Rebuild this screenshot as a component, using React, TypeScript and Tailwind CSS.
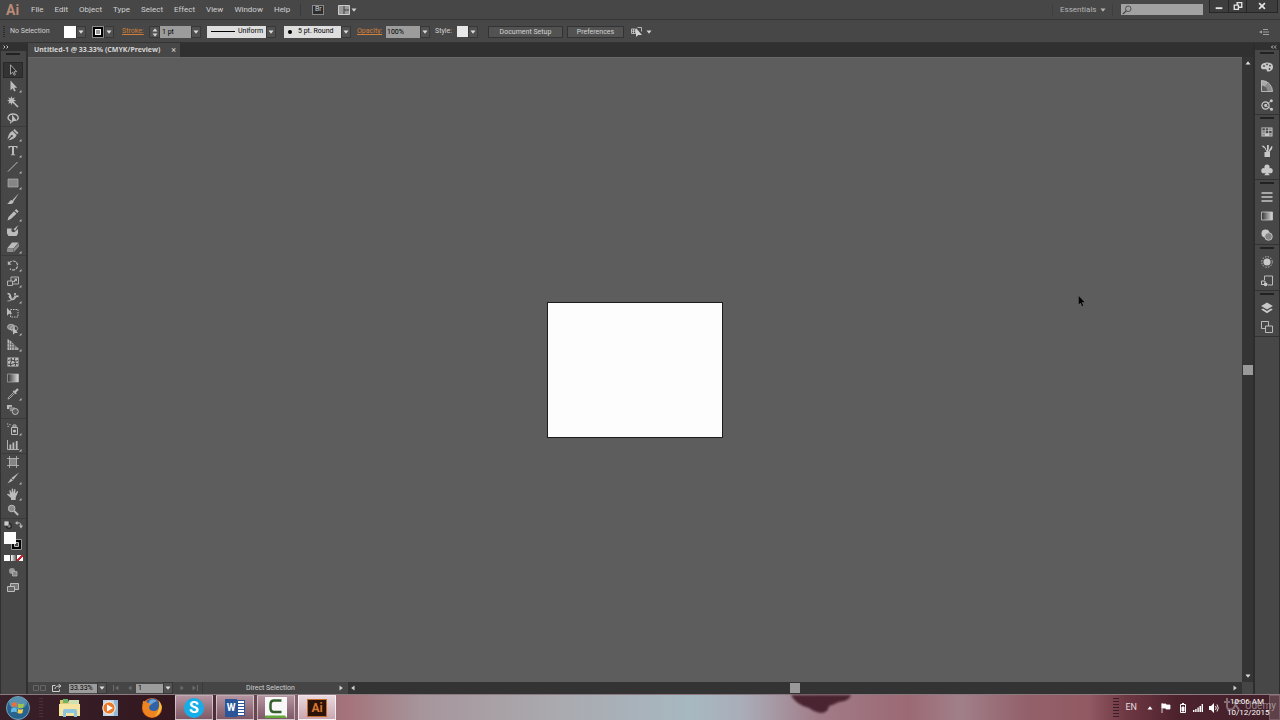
import type { ReactNode } from 'react'
import clsx from 'clsx'

interface Item {
  name: string
  icon: ReactNode
  more?: boolean
  active?: boolean
}

const menus = ['File', 'Edit', 'Object', 'Type', 'Select', 'Effect', 'View', 'Window', 'Help']

// All small icons are drawn on a 12 x 12 grid
const toolGroups: Item[][] = [
  [
    { name: 'Selection', active: true, icon: <path d="M3.5 .8v9.4l2.2-2 1.4 3 1.2-.6L7 7.700h2.700z" fill="#2c2c2c" stroke="currentColor" strokeWidth=".8" /> },
    { name: 'Direct Selection', more: true, icon: <path d="M3.500 .5v10l2.200-2.200 1.500 3.200 1.500-.7-1.500-3h3z" /> },
    {
      name: 'Magic Wand',
      icon: (
        <>
          <path d="M4.500 0l.8 2.500L7.800 1.300 6.700 3.700l2.500.8-2.500.9.9 2.300-2.300-1-.8 2.500-.9-2.500-2.300 1 1-2.300L0 4.500l2.400-.8-1.100-2.400 2.400 1.200z" />
          <path d="M6 6l5 5" stroke="currentColor" strokeWidth="1.600" />
        </>
      ),
    },
    {
      name: 'Lasso',
      icon: (
        <>
          <path d="M3 8.500C-.5 6.500 1 2 6 2s6.500 4 4 6M3 8.500c2 .5 1 2.500 0 2.500" fill="none" stroke="currentColor" strokeWidth="1.300" />
          <path d="M5 2.500v8l1.800-1.600H10z" />
        </>
      ),
    },
  ],
  [
    {
      name: 'Pen',
      more: true,
      icon: <path d="M7.500 0l4 4-1.300 1.300-4-4zM5.600 2l4 4C8.800 9 5.500 10.500 1.500 11.500l3-3.400A1.100 1.100 0 1 0 3.700 7.300L.5 10.500C1.300 6.500 2.500 3 5.600 2z" />,
    },
    { name: 'Type', more: true, icon: <path d="M1.500 1h9v2.600h-.8C9.500 2.400 9.100 2 7 2v7.200l1.300.5v.5H3.700v-.5L5 9.200V2c-2.100 0-2.500.4-2.700 1.600h-.8z" /> },
    { name: 'Line Segment', more: true, icon: <path d="M1 10.500L10.500 1" stroke="currentColor" strokeWidth="1" /> },
    { name: 'Rectangle', more: true, icon: <path d="M1 2h10v8H1z" fill="#858585" stroke="currentColor" strokeWidth=".6" /> },
    { name: 'Paintbrush', icon: <path d="M12 0L5.500 7l1.200 1.200zM5 7l1.800 1.700c-.8 2-3 2.800-6.800 2 2-.3 2.600-3.700 5-3.700z" /> },
    {
      name: 'Pencil',
      more: true,
      icon: <path d="M9.200 0l2.500 2.500L10.200 4 7.700 1.500zM7 2.200l2.500 2.500-5.700 5.300L.5 11.500l1-3.500z" />,
    },
    { name: 'Blob Brush', icon: <path d="M11.500 0L6.500 4.300l1.700 1.500zM0 3.500h5C3.500 5.500 5 7.700 7.500 7L11 4v4.500L9.500 11H1.500L0 8.500z" /> },
    {
      name: 'Eraser',
      more: true,
      icon: (
        <>
          <path d="M5 1.500h6.500l-5 6H0z" />
          <path d="M0 8h6.500v3H0zM7 7.500l5-5.500v3.500L7 11z" fill="#8c8c8c" />
        </>
      ),
    },
  ],
  [
    {
      name: 'Rotate',
      more: true,
      icon: (
        <>
          <path d="M2.300 4A4.500 4.500 0 1 1 3 9.800" fill="none" stroke="currentColor" strokeWidth="1.200" strokeDasharray="3 1" />
          <path d="M.8 2v3.800h3.700z" />
        </>
      ),
    },
    {
      name: 'Scale',
      more: true,
      icon: (
        <>
          <path d="M.5 6h5v4.500h-5zM4 2h7.500v7H5.500M4 2v4" fill="none" stroke="currentColor" strokeWidth=".9" />
          <path d="M6 6.500l2-2-1-1h3v3l-1-1-2 2z" />
        </>
      ),
    },
    {
      name: 'Width',
      more: true,
      icon: (
        <>
          <path d="M.5 2.500c5 0 1.500 6 5 6s2-5 6-3" fill="none" stroke="currentColor" strokeWidth="1.600" />
          <path d="M.5 10c3 0 7-2 8-7.500M2 5.500L5 9" fill="none" stroke="currentColor" strokeWidth=".9" />
          <circle cx="3" cy="6" r="1.200" />
          <circle cx="8" cy="3" r="1.100" />
        </>
      ),
    },
    {
      name: 'Free Transform',
      icon: (
        <>
          <path d="M3.500 2.500h7.500v7.500H3.500z" fill="none" stroke="currentColor" strokeWidth="1" strokeDasharray="1.500 1" />
          <path d="M0 .8v8l2-2h3.300z" />
        </>
      ),
    },
    {
      name: 'Shape Builder',
      more: true,
      icon: (
        <>
          <ellipse cx="4" cy="4" rx="3.500" ry="2.700" fill="#858585" stroke="currentColor" strokeWidth=".8" />
          <ellipse cx="7" cy="5.500" rx="3.700" ry="2.800" fill="none" stroke="currentColor" strokeWidth=".8" />
          <path d="M6 3.500v8.200l1.900-1.800h3z" />
        </>
      ),
    },
    {
      name: 'Perspective Grid',
      more: true,
      icon: (
        <>
          <path d="M.5 0l4 2.500V11h-4z" />
          <path d="M5 3.500L7.500 5.500V11H5zM8 6.500l3.500 2.500v2H8z" fill="#a6a6a6" />
          <path d="M2.500 1v10M0 4.500l8 1.500M0 8h11" stroke="#474747" strokeWidth=".5" />
        </>
      ),
    },
    {
      name: 'Mesh',
      icon: (
        <>
          <path d="M.5 1.500h11v9H.5z" />
          <path d="M1 4.500c4-2 6 2 10 0M1 8c4 2 6-2 10 0M4 2c2 3-2 5 0 8M8 2c-2 3 2 5 0 8" fill="none" stroke="#3c3c3c" strokeWidth="1" />
        </>
      ),
    },
    { name: 'Gradient', icon: <path d="M.5 2h11v8H.5z" fill="url(#ramp)" stroke="currentColor" strokeWidth=".6" /> },
    {
      name: 'Eyedropper',
      more: true,
      icon: (
        <>
          <path d="M7.500 3L10 .5c1 0 1.500.7 1.500 1.500L9 4.500l.8.800-1 1L5.700 3.200l1-1z" />
          <path d="M6.500 4.500l1 1-5 5-1.500.5.5-1.500z" fill="none" stroke="currentColor" strokeWidth=".8" />
        </>
      ),
    },
    {
      name: 'Blend',
      icon: (
        <>
          <path d="M0 1h5v4H0z" />
          <path d="M2.500 3H8v4.500H2.500z" fill="#8c8c8c" stroke="#474747" strokeWidth=".5" />
          <circle cx="8.300" cy="7.500" r="3" fill="#5a5a5a" stroke="currentColor" strokeWidth="1" />
        </>
      ),
    },
  ],
  [
    {
      name: 'Symbol Sprayer',
      more: true,
      icon: (
        <>
          <path d="M4.500 4.500h6v7h-6zM6 2h3v2H6z" fill="none" stroke="currentColor" strokeWidth="1" />
          <circle cx="7.500" cy="8" r="1.600" />
          <path d="M0 .5h1.300v1H0zM2.300 1.200h1.300v1H2.300zM.5 3h1.300v1H.5z" />
        </>
      ),
    },
    {
      name: 'Column Graph',
      more: true,
      icon: (
        <>
          <path d="M.5 1v9.500H12" fill="none" stroke="currentColor" strokeWidth=".9" />
          <path d="M2.500 5.500h1.800V10H2.500zM5.500 3.500h1.800V10H5.500zM8.800 2h1.800v8H8.800z" />
        </>
      ),
    },
  ],
  [
    {
      name: 'Artboard',
      icon: (
        <>
          <path d="M2.500 2.500h7v7h-7z" fill="#858585" />
          <path d="M2.500 0v12M9.500 0v12M0 2.500h12M0 9.500h12" stroke="currentColor" strokeWidth=".8" />
        </>
      ),
    },
    { name: 'Slice', more: true, icon: <path d="M12 .5L4.500 6l1.800 1.800zM4 6.500L6 8.500.5 11.500z" /> },
    { name: 'Hand', more: true, icon: <path d="M3 6.500L2.300 2.500c.6-.7 1.200-.3 1.400.3L4.800 5l-.1-4c.6-.8 1.200-.5 1.400.2L6.500 5l.8-3.800c.7-.6 1.300-.1 1.200.6L8.200 5.500 10 3.200c.9-.3 1.200.3.900 1L8.700 9.500V12H4V10L0 6.500c.2-.9 1.200-.8 1.800-.3z" /> },
    {
      name: 'Zoom',
      icon: (
        <>
          <circle cx="4.700" cy="4.500" r="3.300" fill="#8a8a8a" stroke="currentColor" strokeWidth="1" />
          <path d="M7.200 7l4 4" stroke="currentColor" strokeWidth="1.800" />
        </>
      ),
    },
  ],
]

const panelGroups: Item[][] = [
  [
    {
      name: 'Color',
      icon: (
        <>
          <path d="M5.500 1.500C9 1 12 3 12 6s-3 5-5.500 4.500c-1.300-.3 0-2-1.500-2.300C3 8 0 9 0 6s2.500-4.200 5.500-4.500z" />
          <g fill="#474747">
            <circle cx="3" cy="5" r=".9" />
            <circle cx="6" cy="3.400" r=".9" />
            <circle cx="9" cy="4.700" r=".9" />
            <circle cx="8.500" cy="8" r=".9" />
          </g>
        </>
      ),
    },
    {
      name: 'Color Guide',
      icon: (
        <>
          <path d="M.5 .5a11 11 0 0 1 11 11H.5z" fill="#8c8c8c" />
          <path d="M.5 .5c2.500 0 4.500.7 6.200 1.900L.5 11.500z" fill="#a8a8a8" />
          <path d="M.5 5.500a6 6 0 0 1 6 6h-6z" fill="#5e5e5e" />
          <path d="M.5 .5a11 11 0 0 1 11 11H.5z" fill="none" stroke="currentColor" strokeWidth=".8" />
        </>
      ),
    },
    {
      name: 'Kuler',
      icon: (
        <>
          <circle cx="4.500" cy="6.500" r="3.600" fill="none" stroke="currentColor" strokeWidth="1.200" />
          <circle cx="4.500" cy="6.500" r="1.400" />
          <path d="M5 6l5-4M5 7l5.500 3" stroke="currentColor" strokeWidth=".9" />
          <circle cx="10.300" cy="1.700" r="1.500" />
          <circle cx="10.500" cy="10.300" r="1.500" />
        </>
      ),
    },
  ],
  [
    {
      name: 'Swatches',
      icon: (
        <>
          <path d="M.5 1.500h11v9H.5z" />
          <path d="M1.300 2.300h2.600v2.200H1.300zM4.700 2.300h2.600v2.200H4.700zM8.100 5h2.600v2.200H8.100zM4.700 5h2.600v2.200H4.700z" fill="#4c4c4c" />
          <path d="M8.100 2.300h2.600v2.200H8.100zM1.300 5h2.600v2.200H1.300zM1.300 7.800h2.600v2H1.300zM8.100 7.800h2.600v2H8.100z" fill="#8a8a8a" />
        </>
      ),
    },
    { name: 'Brushes', icon: <path d="M3.500 7h5.500v5H3.500zM5.500 7L3.800 3.500 2.300 2.500.5.800h2.200l1.800 2L6 6V0h1.800v3.500L7 7l2-3.500L10.500 1l1 .5L11 4 8.500 7z" /> },
    {
      name: 'Symbols',
      icon: (
        <>
          <circle cx="6" cy="3" r="2.600" />
          <circle cx="2.900" cy="6.700" r="2.600" />
          <circle cx="9.100" cy="6.700" r="2.600" />
          <path d="M5 4h2l.3 5 1.500 2.300h-5.500L4.700 9z" />
        </>
      ),
    },
  ],
  [
    { name: 'Stroke', icon: <path d="M.5 2h11M.5 6h11M.5 10h11" stroke="currentColor" strokeWidth="1.300" /> },
    { name: 'Gradient', icon: <path d="M.5 2h11v8H.5z" fill="url(#ramp)" stroke="currentColor" strokeWidth=".8" /> },
    {
      name: 'Transparency',
      icon: (
        <>
          <circle cx="4.500" cy="4.500" r="4" />
          <circle cx="7.500" cy="7.500" r="3.800" fill="#858585" stroke="currentColor" strokeWidth=".9" />
        </>
      ),
    },
  ],
  [
    {
      name: 'Appearance',
      icon: (
        <>
          <circle cx="6" cy="6" r="3.600" />
          <circle cx="6" cy="6" r="5.300" fill="none" stroke="currentColor" strokeWidth=".9" strokeDasharray="1.500 1.270" />
        </>
      ),
    },
    {
      name: 'Graphic Styles',
      icon: (
        <>
          <path d="M3.500 5V1h8v9H7" fill="none" stroke="currentColor" strokeWidth=".9" />
          <path d="M.5 6h3.500v3.500H.5z" fill="none" stroke="currentColor" strokeWidth="1" />
          <circle cx="4.600" cy="9.300" r="1.900" />
        </>
      ),
    },
  ],
  [
    {
      name: 'Layers',
      icon: (
        <>
          <path d="M6 .5l5.800 3.500L6 7.500.2 4z" />
          <path d="M2 6.400L.2 7.500 6 11.200l5.800-3.700L10 6.400 6 9z" />
        </>
      ),
    },
    {
      name: 'Artboards',
      icon: (
        <>
          <path d="M.5 .5h7v7h-7z" fill="none" stroke="currentColor" strokeWidth=".9" />
          <path d="M4.500 5h7v6.500h-7z" fill="#474747" stroke="currentColor" strokeWidth=".9" />
        </>
      ),
    },
  ],
]

const taskbarLight = 'border-white/50 bg-linear-to-b from-[#b494a0] to-[#7e5866]'

function Glyph({ children }: { children: ReactNode }) {
  return (
    <svg viewBox="0 0 12 12" className="size-3 shrink-0" fill="currentColor" aria-hidden="true">
      {children}
    </svg>
  )
}

function Caret({ dir = 'down' }: { dir?: 'down' | 'up' | 'left' | 'right' }) {
  const paths = {
    down: 'M.5 1.500h5L3 4.800z',
    up: 'M.5 4.500h5L3 1.200z',
    left: 'M4.500 .5v5L1.200 3z',
    right: 'M1.500 .5v5L4.800 3z',
  }
  return (
    <svg viewBox="0 0 6 6" className="size-[6px] shrink-0" fill="currentColor" aria-hidden="true">
      <path d={paths[dir]} />
    </svg>
  )
}

function DropButton({ label }: { label: string }) {
  return (
    <button aria-label={label} className="flex h-3 w-[10px] shrink-0 items-center justify-center border border-[#383838] bg-[#505050] text-[#dcdcdc]">
      <Caret />
    </button>
  )
}

function TitleBar() {
  return (
    <header className="flex h-5 items-center border-b border-[#363636] bg-[#474747] pl-[6px] text-[8px] text-[#d0d0d0]">
      <span className="w-[25px] text-[14px] leading-4 font-bold text-[#b98b76]">Ai</span>
      <nav className="flex items-center gap-[11px]">
        {menus.map((menu) => (
          <button key={menu}>{menu}</button>
        ))}
      </nav>
      <div className="ml-[10px] h-3 w-px bg-[#393942]" />
      <button className="ml-[11px] flex h-[10px] w-3 items-center justify-center border border-[#8a8a8a] bg-[#2d2d2d] text-[7px]">Br</button>
      <button aria-label="Arrange Documents" className="ml-[14px] flex items-center gap-px">
        <svg viewBox="0 0 12 10" className="h-[10px] w-3">
          <path d="M.5 .5h11v9H.5z" fill="#999" stroke="#ccc" />
          <path d="M6 1v8M6 5h5" stroke="#404040" />
        </svg>
        <Caret />
      </button>
      <div className="ml-auto flex h-full items-center">
        <div className="h-3 w-px bg-[#3e3e3e]" />
        <button className="flex w-[59px] items-center justify-between pr-[6px] pl-[7px] text-[#b4b4b4]">
          Essentials
          <Caret />
        </button>
        <div className="h-3 w-px bg-[#3e3e3e]" />
        <label className="ml-2 flex h-[11px] w-[82px] items-center bg-[#a2a2a2] text-[#404040]">
          <svg viewBox="0 0 12 12" className="h-[10px] w-3 shrink-0" fill="none" stroke="currentColor">
            <circle cx="7.500" cy="4.500" r="3.300" />
            <path d="M5 7l-4 4" strokeWidth="1.500" />
          </svg>
          <input type="search" aria-label="Search help" className="w-full min-w-0 outline-none" />
        </label>
        <div className="mr-[2px] ml-[6px] flex h-[13px] self-start border border-t-0 border-[#262626] bg-[#3d3d3d] text-[#e4e4e4]">
          <button aria-label="Minimize" className="flex w-[19px] items-center justify-center border-r border-[#262626]">
            <svg viewBox="0 0 12 12" className="size-[10px]"><path d="M2 7.500h8v2.200H2z" fill="currentColor" /></svg>
          </button>
          <button aria-label="Restore" className="flex w-[18px] items-center justify-center border-r border-[#262626]">
            <svg viewBox="0 0 12 12" className="size-[10px]" fill="none" stroke="currentColor" strokeWidth="1.600">
              <path d="M1.500 5h5v5h-5zM5 5V2h5.500v5.500H7" />
            </svg>
          </button>
          <button aria-label="Close" className="flex w-[30px] items-center justify-center">
            <svg viewBox="0 0 12 12" className="size-[10px]" stroke="currentColor" strokeWidth="2"><path d="M2.500 2.500l7 7M9.500 2.500l-7 7" /></svg>
          </button>
        </div>
      </div>
    </header>
  )
}

function ControlBar() {
  return (
    <div className="flex h-[23px] items-center border-b border-[#333] bg-[#474747] pt-px pl-[3px] text-[7px] text-[#d2d2d2]">
      <div className="h-3 w-[2px] bg-[repeating-linear-gradient(to_bottom,#2c2c2c_0_1px,#474747_1px_2px)]" />
      <span className="ml-[5px] w-[54px] whitespace-nowrap">No Selection</span>
      <button aria-label="Fill" className="size-3 bg-white" />
      <DropButton label="Fill options" />
      <button aria-label="Stroke color" className="ml-[6px] flex size-3 items-center justify-center border border-[#8a8a8a] bg-black">
        <span className="size-[6px] border border-white bg-[#999]" />
      </button>
      <DropButton label="Stroke color options" />
      <a href="#stroke" className="ml-2 w-[27px] text-[#d0803a] underline">Stroke:</a>
      <div className="flex h-3 w-[11px] flex-col items-center justify-center border border-[#383838] bg-[#505050]">
        <button aria-label="Increase stroke" className="h-[5px]"><Caret dir="up" /></button>
        <button aria-label="Decrease stroke" className="h-[5px]"><Caret /></button>
      </div>
      <input aria-label="Stroke weight" defaultValue="1 pt" className="h-3 w-[31px] bg-[#9c9c9c] px-[2px] text-black outline-none" />
      <DropButton label="Stroke weight options" />
      <label className="ml-[6px] flex h-3 w-[59px] items-center bg-[#dedede] pl-1 text-black">
        <span className="h-px w-6 bg-black" />
        <select aria-label="Width profile" className="ml-[3px] w-7 appearance-none outline-none">
          <option>Uniform</option>
        </select>
      </label>
      <DropButton label="Width profile options" />
      <label className="ml-2 flex h-3 w-[57px] items-center bg-[#dedede] pl-1 text-black">
        <span className="size-1 rounded-full bg-black" />
        <select aria-label="Brush definition" className="ml-[6px] w-[42px] appearance-none outline-none">
          <option>5 pt. Round</option>
        </select>
      </label>
      <DropButton label="Brush options" />
      <a href="#opacity" className="ml-[6px] w-[29px] text-[#d0803a] underline">Opacity:</a>
      <input aria-label="Opacity" defaultValue="100%" className="h-3 w-[34px] bg-[#9c9c9c] px-px text-black outline-none" />
      <DropButton label="Opacity options" />
      <span className="ml-[5px] w-[22px]">Style:</span>
      <button aria-label="Graphic style" className="size-[11px] bg-[#e8e8e8]" />
      <DropButton label="Graphic style options" />
      <button className="ml-[10px] h-3 w-[75px] border border-[#333] bg-[#525252] leading-[10px] whitespace-nowrap">Document Setup</button>
      <button className="ml-1 h-3 w-[57px] border border-[#333] bg-[#525252] leading-[10px]">Preferences</button>
      <button aria-label="Select similar" className="ml-[7px] flex items-center gap-[3px]">
        <Glyph>
          <path d="M.5 3h4v4.500h-4zM2.500 3v4.500M.5 5.200h4M6.500 1.500h4v4" fill="none" stroke="currentColor" strokeWidth=".8" />
          <path d="M5 2v9l2.200-2H11z" />
        </Glyph>
        <Caret />
      </button>
      <button aria-label="Control panel menu" className="mr-[11px] ml-auto">
        <svg viewBox="0 0 10 8" className="h-2 w-[10px]" fill="none" stroke="#a8a8a8">
          <path d="M4 1.500h5M4 4h6M4 6.500h6" strokeWidth=".9" />
          <path d="M0 4l3-1.500v3z" fill="#a8a8a8" stroke="none" />
        </svg>
      </button>
    </div>
  )
}

function ToolPanel() {
  return (
    <aside className="flex w-7 shrink-0 flex-col border-r-2 border-l border-[#303030] bg-[#474747] text-[#bcbcbc]">
      <div className="flex h-2 items-center bg-[#303030] pl-[2px]">
        <svg viewBox="0 0 6 4" className="h-1 w-[6px]" fill="none" stroke="currentColor"><path d="M.5 .5L2 2 .5 3.500M3.500 .5L5 2 3.500 3.500" /></svg>
      </div>
      <div className="mt-[2px] mb-[7px] ml-[5px] h-[2px] w-[14px] bg-[#222]" />
      {toolGroups.map((group, i) => (
        <div key={i} className={clsx('flex flex-col pl-[2px]', i > 0 && 'border-t border-[#3b3b3b]', i === 3 && 'pt-[2px]')}>
          {group.map((tool) => (
            <button
              key={tool.name}
              aria-label={tool.name}
              className={clsx('h-4 w-5 border', tool.active ? 'border-[#292929] bg-[#333]' : 'border-transparent', tool.name === 'Rotate' && 'mt-px', tool.name === 'Mesh' && 'mt-px')}
            >
              <svg viewBox="0 0 18 14" className="h-[14px] w-[18px]" fill="currentColor">
                <g transform="translate(3 1)">{tool.icon}</g>
                {tool.more && <path d="M17.500 11v2.500H15z" />}
              </svg>
            </button>
          ))}
        </div>
      ))}
      <div className="flex h-[13px] items-center justify-between border-t border-[#3b3b3b] px-[3px]">
        <button aria-label="Default fill and stroke">
          <svg viewBox="0 0 8 8" className="size-2"><path d="M3 3h4v4H3z" stroke="#111" fill="#999" /><path d="M0 0h5v5H0z" fill="#ccc" stroke="#222" strokeWidth=".6" /></svg>
        </button>
        <button aria-label="Swap fill and stroke">
          <svg viewBox="0 0 8 8" className="size-2" fill="currentColor"><path d="M2 2h2.500Q6 2 6 5" fill="none" stroke="currentColor" /><path d="M0 2l2.500-2v4zM4 4.500h4L6 7.500z" /></svg>
        </button>
      </div>
      <button aria-label="Fill and stroke" className="mt-px ml-[3px] size-[19px]">
        <svg viewBox="0 0 19 19" className="size-[19px]">
          <path d="M7.500 7.500h10v10h-10z" fill="#000" stroke="#999" />
          <path d="M10.500 10.500h4v4h-4z" fill="#474747" stroke="#bbb" />
          <path d="M0 0h12v12H0z" fill="#fcfcfc" />
        </svg>
      </button>
      <div className="mt-1 ml-[3px] flex h-[6px] gap-px">
        <button aria-label="Color" className="w-[6px] bg-white" />
        <button aria-label="Gradient" className="w-[5px] bg-linear-to-r from-white to-[#666]" />
        <button aria-label="None" className="w-[6px] bg-[linear-gradient(135deg,#fff_0_35%,#d02030_35%_65%,#fff_65%)]" />
      </div>
      <button aria-label="Drawing mode" className="mt-[6px] ml-[7px] w-[10px]">
        <svg viewBox="0 0 10 10" className="size-[10px]"><circle cx="4" cy="4" r="3" fill="#999" /><path d="M4.500 4.500h4.500v4.500H4.500z" fill="#858585" stroke="#bbb" strokeWidth=".7" /></svg>
      </button>
      <button aria-label="Screen mode" className="mt-[5px] ml-[6px] w-3">
        <Glyph>
          <path d="M3.500 1.500h8v6h-8z" fill="#777" stroke="currentColor" />
          <path d="M.5 4.500h7v5h-7z" fill="#666" stroke="currentColor" />
        </Glyph>
      </button>
    </aside>
  )
}

function StatusBar() {
  return (
    <div className="flex h-3 shrink-0 items-center bg-[#333] text-[7px] text-[#d0d0d0]">
      <div className="flex h-full w-[320px] shrink-0 items-center bg-[#454545] pl-[5px]">
        <svg viewBox="0 0 13 6" className="h-[6px] w-[13px]" fill="none" stroke="#666"><path d="M.5 .5h5v5h-5zM7.500 .5h5v5h-5z" /></svg>
        <button aria-label="Share" className="ml-[6px]">
          <svg viewBox="0 0 10 8" className="h-2 w-[10px]" fill="none" stroke="currentColor"><path d="M3.500 1.500h-3v6h7v-2M3 5q0-3 5-3M6.500 0L9 2 6.500 4" /></svg>
        </button>
        <input aria-label="Zoom level" defaultValue="33.33%" className="ml-[7px] h-[9px] w-7 bg-[#9c9c9c] px-px text-black outline-none" />
        <DropButton label="Zoom options" />
        <div className="ml-[6px] flex gap-[7px] text-[#6c6c6c]">
          <button aria-label="First artboard" className="flex border-l"><Caret dir="left" /></button>
          <button aria-label="Previous artboard" className="flex"><Caret dir="left" /></button>
        </div>
        <input aria-label="Artboard number" defaultValue="1" className="ml-[3px] h-[9px] w-[27px] bg-[#9c9c9c] px-[2px] text-black outline-none" />
        <DropButton label="Artboard options" />
        <div className="ml-[6px] flex gap-[6px] text-[#6c6c6c]">
          <button aria-label="Next artboard" className="flex"><Caret dir="right" /></button>
          <button aria-label="Last artboard" className="flex border-r"><Caret dir="right" /></button>
        </div>
        <div className="ml-1 h-full w-px bg-[#3a3a3a]" />
        <span className="flex-1 text-center whitespace-nowrap">Direct Selection</span>
        <button aria-label="Status options" className="mr-1"><Caret dir="right" /></button>
      </div>
      <button aria-label="Scroll left" className="px-[2px]"><Caret dir="left" /></button>
      <div className="flex flex-1 justify-center"><div className="size-[10px] bg-[#999]" /></div>
      <button aria-label="Scroll right" className="mr-1"><Caret dir="right" /></button>
      <div className="h-full w-[11px] bg-[#454545]" />
    </div>
  )
}

function Workspace() {
  return (
    <main className="flex min-w-0 flex-1 flex-col">
      <div className="flex h-[14px] shrink-0 bg-[#303030]">
        <div className="flex w-[152px] items-center justify-between bg-[#474747] pr-1 pl-[6px] text-[#d4d4d4]">
          <span className="font-['Noto_Sans',sans-serif] text-[7px] leading-[14px] font-bold whitespace-nowrap">Untitled-1 @ 33.33% (CMYK/Preview)</span>
          <button aria-label="Close document" className="text-[9px] leading-[14px]">×</button>
        </div>
      </div>
      <div className="flex flex-1">
        <div className="flex flex-1 items-center justify-center border-t border-[#686868] bg-[#5d5d5d]">
          <div className="h-[136px] w-44 border border-[#1c1c1c] bg-[#fdfdfd]" />
        </div>
        <div className="flex w-[11px] shrink-0 flex-col items-center bg-[#343434] py-[3px] text-[#dcdcdc]">
          <button aria-label="Scroll up"><Caret dir="up" /></button>
          <div className="flex flex-1 items-center"><div className="size-[10px] bg-[#999]" /></div>
          <button aria-label="Scroll down"><Caret /></button>
        </div>
      </div>
      <StatusBar />
    </main>
  )
}

function PanelDock() {
  return (
    <aside className="w-[27px] shrink-0 border-r border-l-2 border-[#2d2d2d] bg-[#474747] text-[#c8c8c8]">
      <div className="flex h-[7px] items-center justify-end bg-[#303030] pr-[2px]">
        <svg viewBox="0 0 6 4" className="h-1 w-[6px]" fill="none" stroke="currentColor"><path d="M2 .5L.5 2 2 3.500M5 .5L3.500 2 5 3.500" /></svg>
      </div>
      {panelGroups.map((group, i) => (
        <div key={i} className="flex flex-col items-center border-b border-[#333] pt-[2px]">
          <div className="mb-[3px] h-[2px] w-[14px] bg-[#222]" />
          {group.map((panel) => (
            <button key={panel.name} aria-label={panel.name} className="flex h-[19px] items-center">
              <Glyph>{panel.icon}</Glyph>
            </button>
          ))}
        </div>
      ))}
    </aside>
  )
}

function Taskbar() {
  return (
    <footer className="relative flex h-[26px] shrink-0 items-center border-t border-[#8b7b80] bg-[linear-gradient(to_right,#382029_0%,#33171f_14%,#96707a_25%,#a5727a_27%,#a6969c_33%,#aaa9ae_43%,#a7b8c1_54%,#a9adb8_58%,#a17c88_64%,#9b6974_71%,#a1808a_75%,#93616b_80%,#925a63_85%,#6e3843_88%,#4c222d_92%,#41202a_100%)] pl-[6px] text-white">
      <svg viewBox="0 0 62 19" className="absolute top-0 left-[790px] h-[19px] w-[62px] blur-[1px]" aria-hidden="true">
        <path d="M1 0h60q-2 6-12 7-6 3-10 4-1 7-8 7-7-1-12-5Q5 9 1 0z" fill="#4a2531" />
      </svg>
      <button aria-label="Start" className="relative">
        <svg viewBox="0 0 24 24" className="size-6">
          <circle cx="12" cy="12" r="11.500" fill="#27638c" stroke="#8fb5ca" strokeWidth=".8" />
          <ellipse cx="12" cy="7" rx="9" ry="6" fill="#79afc8" opacity=".6" />
          <path d="M6 7q3-1.500 5 0v4q-2-1.500-5.500 0z" fill="#e8703c" />
          <path d="M12 7.500q2.500 1 6 0l-.8 4q-2.700 1-5.200 0z" fill="#9bc84c" />
          <path d="M5.300 12.500q3-1.500 5.500 0v4q-2.500-1.500-6 0z" fill="#62b9e8" />
          <path d="M12 13q2.500 1 5.200 0l-.8 4q-2.500 1-4.900 0z" fill="#f8d04f" />
        </svg>
      </button>
      <div className="ml-[9px] h-5 w-1 bg-[repeating-linear-gradient(to_bottom,#4a313b_0_1px,transparent_1px_3px)]" />
      <button aria-label="Explorer" className="ml-4">
        <svg viewBox="0 0 22 20" className="h-5 w-[22px]">
          <path d="M1 2h8l1 2h10v14H1z" fill="#e3c870" />
          <path d="M4 1h5v4H4z" fill="#6ab36a" />
          <path d="M10 2h10v4H10z" fill="#cfe0b2" />
          <path d="M0 6h21v12H0z" fill="#f5e3a0" />
          <path d="M4 19v-6q0-2 2-2h10q2 0 2 2v6h-3v-4H7v4z" fill="#8cc5dd" />
        </svg>
      </button>
      <button aria-label="Media Player" className="ml-5">
        <svg viewBox="0 0 18 18" className="size-[18px]">
          <path d="M2 1h15v16H2z" fill="#91b9d3" />
          <path d="M2 1h11v16H2z" fill="#bdd5e4" />
          <circle cx="8" cy="9" r="6.200" fill="#eb7a2b" stroke="#fff" />
          <path d="M6 5.500v7l6-3.500z" fill="#fff" />
        </svg>
      </button>
      <button aria-label="Firefox" className="ml-[22px]">
        <svg viewBox="0 0 22 22" className="size-[22px]">
          <circle cx="11" cy="11" r="10" fill="#e66a1d" />
          <circle cx="11.500" cy="8.500" r="7" fill="#2f62a8" />
          <path d="M9 3q4-2 7 1l-4 2q-2 3-5 1z" fill="#6aa5d8" />
          <path d="M2 4q3 0 5 2l3 1-2 3q0 4 5 4 4 0 5-4 2 3 2-3 2 8-4 12-6 3-11-1-5-5-3-14z" fill="#ef8421" />
          <path d="M18 4q4 5 2 9-2 5-6 6 5-5 4-15z" fill="#f8bc37" />
        </svg>
      </button>
      <div className="ml-3 flex gap-[3px]">
        <button aria-label="Skype" className={clsx('flex h-[25px] w-[38px] items-center justify-center border', taskbarLight)}>
          <span className="flex size-5 items-center justify-center rounded-full bg-[#16aee8] text-[16px] leading-none font-bold text-white">S</span>
        </button>
        <button aria-label="Word" className={clsx('flex h-[25px] w-[38px] items-center justify-center border', taskbarLight)}>
          <span className="flex h-[18px] w-3 items-center justify-center bg-[#2a5699] text-[10px] font-bold text-white">W</span>
          <span className="h-4 w-2 border border-[#2a5699] bg-[repeating-linear-gradient(to_bottom,#fff_0_2px,#2a5699_2px_3px)]" />
        </button>
        <button aria-label="Camtasia" className={clsx('flex h-[25px] w-[38px] items-center justify-center border', taskbarLight)}>
          <svg viewBox="0 0 22 21" className="h-[21px] w-[22px]">
            <path d="M0 0h22v21H0z" fill="#f8f8f8" />
            <path d="M16.500 3.500H9q-3.500 0-3.500 4v3.500q0 4 3.500 4h7.500" fill="none" stroke="#355f2c" strokeWidth="2.500" />
            <path d="M0 18.500h20l2 2.500H0z" fill="#64a83c" />
          </svg>
        </button>
        <button aria-label="Illustrator" className="flex h-[25px] w-[38px] items-center justify-center border border-white/70 bg-linear-to-b from-[#e8d8de] to-[#c9a6b0]">
          <span className="flex h-[18px] w-5 items-center justify-center border border-[#c26a28] bg-[#2c130a] text-[12px] font-bold text-[#d8782c]">Ai</span>
        </button>
      </div>
      <div className="ml-auto flex h-full items-center">
        <div className="h-5 w-[6px] bg-[repeating-linear-gradient(to_bottom,#3c1e28_0_1px,transparent_1px_3px)]" />
        <button className="ml-[6px] text-[9px] text-[#e4dade]">EN</button>
        <button aria-label="Show hidden icons" className="ml-[10px]"><Caret dir="up" /></button>
        <button aria-label="Action Center" className="ml-2">
          <svg viewBox="0 0 10 10" className="size-[10px]" fill="currentColor"><path d="M1 0v10M1 1h4v1h4v4H5V5H1z" stroke="currentColor" strokeWidth=".8" /></svg>
        </button>
        <button aria-label="Battery" className="ml-2">
          <svg viewBox="0 0 8 10" className="h-[10px] w-2" fill="none" stroke="currentColor"><path d="M1.500 1.500h5v8h-5zM3 .5h2" /><path d="M3 4h2v4H3z" fill="currentColor" /></svg>
        </button>
        <button aria-label="Network" className="ml-[6px]">
          <svg viewBox="0 0 10 8" className="h-2 w-[10px]" fill="currentColor"><path d="M0 6h1.400v2H0zM2.200 5h1.400v3H2.200zM4.400 3.500h1.400V8H4.400zM6.500 2H8v6H6.500zM8.600 0H10v8H8.600z" /></svg>
        </button>
        <button aria-label="Volume" className="ml-[6px]">
          <svg viewBox="0 0 10 10" className="size-[10px]" fill="currentColor"><path d="M0 3h2l3-3v10L2 7H0z" /><path d="M6.500 3q1.500 2 0 4M8 1.500q2.500 3.500 0 7" fill="none" stroke="currentColor" strokeWidth=".9" /></svg>
        </button>
        <button className="relative ml-2 w-[40px] pb-px text-center text-[8px] leading-[11px]">
          10:06 AM
          <br />
          10/12/2015
          {/* recording watermark over the clock */}
          <svg viewBox="0 0 18 14" className="absolute top-[2px] left-[-3px] h-[14px] w-[18px] opacity-35" fill="none" stroke="#fff" strokeWidth="2">
            <path d="M3 0v8q0 4 4 3.500 3-.5 4-4L13 3h4M0 4h6M10 4l5 8" />
          </svg>
          <span className="absolute top-1 left-[18px] text-[10px] leading-3 text-white/45">Udemy</span>
        </button>
        <button aria-label="Show desktop" className="ml-[2px] h-full w-[11px] border border-[#8a6d76]/60 bg-white/15" />
      </div>
    </footer>
  )
}

export default function App() {
  return (
    <div className="relative flex min-h-screen flex-col overflow-hidden bg-[#474747] font-['Roboto','Noto_Sans',sans-serif] text-[8px]">
      <svg className="absolute size-0" aria-hidden="true">
        <linearGradient id="ramp">
          <stop offset="0" stopColor="#333" />
          <stop offset="1" stopColor="#ddd" />
        </linearGradient>
      </svg>
      <TitleBar />
      <ControlBar />
      <div className="flex flex-1">
        <ToolPanel />
        <Workspace />
        <PanelDock />
      </div>
      <Taskbar />
      {/* mouse pointer */}
      <svg viewBox="0 0 8 12" className="pointer-events-none absolute top-[295px] left-[1078px] h-3 w-2" aria-hidden="true">
        <path d="M.5 .5v9.500l2-2 1.500 3.500 1.500-.7L4 7.500h3z" fill="#000" stroke="#888" strokeWidth=".3" />
      </svg>
    </div>
  )
}
